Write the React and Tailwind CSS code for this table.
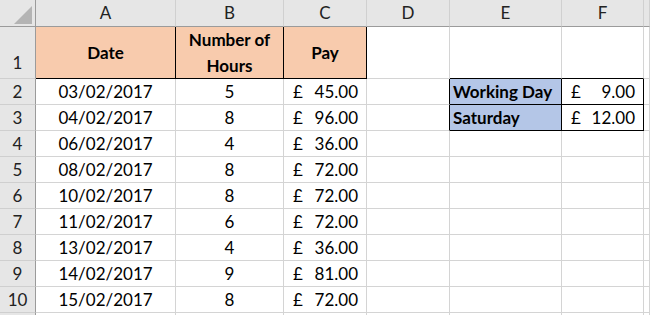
import React from "react";

const cols = ["A", "B", "C", "D", "E", "F", ""];

const rows = [
  ["03/02/2017", "5", "45.00"],
  ["04/02/2017", "8", "96.00"],
  ["06/02/2017", "4", "36.00"],
  ["08/02/2017", "8", "72.00"],
  ["10/02/2017", "8", "72.00"],
  ["11/02/2017", "6", "72.00"],
  ["13/02/2017", "4", "36.00"],
  ["14/02/2017", "9", "81.00"],
  ["15/02/2017", "8", "72.00"],
];

const rates = [
  ["Working Day", "9.00"],
  ["Saturday", "12.00"],
];

const grid = "border-r border-b border-[#d4d4d4]";
const rowHead =
  "bg-[#e6e6e6] border-r border-r-[#9b9b9b] border-b border-b-[#cfcfcf] flex items-center justify-center text-[#222]";

// accounting format: pound sign on the left, amount on the right
const Money = ({ value, className = "" }) => (
  <div className={`flex items-center justify-between pl-[9px] pr-[8px] ${className}`}>
    <span>£</span>
    <span>{value}</span>
  </div>
);

export default function App() {
  return (
    <div
      className="w-[650px] h-[315px] overflow-hidden bg-white text-[17px] text-black"
      style={{ fontFamily: "Lato, 'Open Sans', sans-serif" }}
    >
      <div className="grid grid-cols-[36px_140px_108px_83px_83px_112px_82px_1fr] grid-rows-[27px_52px_repeat(11,26px)]">
        {/* corner */}
        <div className="bg-[#e6e6e6] border-r border-b border-[#9b9b9b] relative">
          <svg className="absolute left-[14px] top-[6px]" width="18" height="18" viewBox="0 0 18 18">
            <polygon points="18,0 18,18 0,18" fill="#b4b4b4" />
          </svg>
        </div>
        {/* column letters */}
        {cols.map((c, i) => (
          <div
            key={i}
            className="bg-[#e6e6e6] border-r border-r-[#d0d0d0] border-b border-b-[#9b9b9b] flex items-center justify-center text-[#222]"
          >
            {c}
          </div>
        ))}

        {/* row 1 */}
        <div className={`${rowHead} !items-end pb-[3px]`}>1</div>
        <div className="bg-[#f8cbad] border-r border-b border-black flex items-center justify-center font-bold">
          Date
        </div>
        <div className="bg-[#f8cbad] border-r border-b border-black flex flex-col items-center justify-center font-bold leading-[26px]">
          <span>Number of</span>
          <span>Hours</span>
        </div>
        <div className="bg-[#f8cbad] border-r border-b border-black flex items-center justify-center font-bold">
          Pay
        </div>
        <div className={grid} />
        <div className="border-r border-[#d4d4d4] border-b border-b-black" />
        <div className="border-r border-[#d4d4d4] border-b border-b-black" />
        <div className={grid} />

        {/* data rows */}
        {rows.map((r, i) => {
          const rate = rates[i];
          return (
            <React.Fragment key={i}>
              <div className={rowHead}>{i + 2}</div>
              <div className={`${grid} flex items-center justify-center`}>{r[0]}</div>
              <div className={`${grid} flex items-center justify-center`}>{r[1]}</div>
              <Money value={r[2]} className={grid} />
              {rate ? (
                <>
                  <div className="border-r border-r-black border-b border-b-[#d4d4d4]" />
                  <div className="bg-[#b4c6e7] border-r border-b border-black flex items-center pl-[3px] font-bold">
                    {rate[0]}
                  </div>
                  <Money value={rate[1]} className="border-r border-b border-black" />
                </>
              ) : (
                <>
                  <div className={grid} />
                  <div className={grid} />
                  <div className={grid} />
                </>
              )}
              <div className={grid} />
            </React.Fragment>
          );
        })}

        {/* row 11, cut off at the bottom edge */}
        <div className={rowHead} />
        {cols.map((c, i) => (
          <div key={i} className={grid} />
        ))}
      </div>
    </div>
  );
}
